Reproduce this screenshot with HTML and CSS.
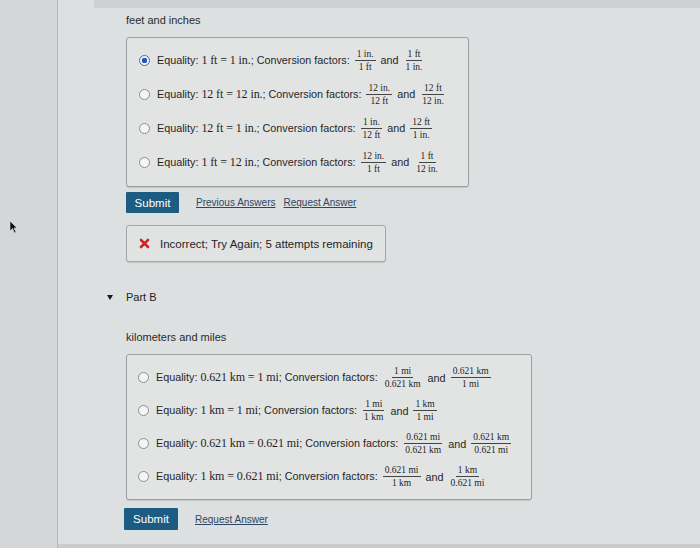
FILE: index.html
```html
<!DOCTYPE html>
<html lang="en">
<head>
<meta charset="utf-8">
<link rel="stylesheet" href="styles.css">
</head>
<body>
<div class="screen">
  <aside class="gutter">
    <svg class="cursor" width="9" height="14" viewBox="0 0 9 14"><path d="M1 1 L1 11 L3.5 8.5 L5.5 13 L7 12.3 L5 8 L8 8 Z" fill="#111" stroke="#ddd" stroke-width="0.6"/></svg>
  </aside>
  <main class="page">
    <div class="topband"></div>

    <section class="part">
      <p class="prompt">feet and inches</p>
      <div class="choices tall">
        <label class="choice">
          <span class="radio checked"></span>
          <span class="txt">Equality: <span class="m">1 ft = 1 in.</span>; Conversion factors:</span>
          <span class="frac"><span class="num">1 in.</span><span class="den">1 ft</span></span>
          <span class="and">and</span>
          <span class="frac"><span class="num">1 ft</span><span class="den">1 in.</span></span>
        </label>
        <label class="choice">
          <span class="radio"></span>
          <span class="txt">Equality: <span class="m">12 ft = 12 in.</span>; Conversion factors:</span>
          <span class="frac"><span class="num">12 in.</span><span class="den">12 ft</span></span>
          <span class="and">and</span>
          <span class="frac"><span class="num">12 ft</span><span class="den">12 in.</span></span>
        </label>
        <label class="choice">
          <span class="radio"></span>
          <span class="txt">Equality: <span class="m">12 ft = 1 in.</span>; Conversion factors:</span>
          <span class="frac"><span class="num">1 in.</span><span class="den">12 ft</span></span>
          <span class="and">and</span>
          <span class="frac"><span class="num">12 ft</span><span class="den">1 in.</span></span>
        </label>
        <label class="choice">
          <span class="radio"></span>
          <span class="txt">Equality: <span class="m">1 ft = 12 in.</span>; Conversion factors:</span>
          <span class="frac"><span class="num">12 in.</span><span class="den">1 ft</span></span>
          <span class="and">and</span>
          <span class="frac"><span class="num">1 ft</span><span class="den">12 in.</span></span>
        </label>
      </div>
      <div class="actions">
        <button class="submit">Submit</button>
        <a class="link first" href="#">Previous Answers</a>
        <a class="link" href="#">Request Answer</a>
      </div>
      <div class="feedback">
        <svg class="xmark" width="11" height="11" viewBox="0 0 11 11"><path d="M2 2 L9 9 M9 2 L2 9" stroke="#c8262b" stroke-width="2.6" stroke-linecap="round"/></svg>
        <span>Incorrect; Try Again; 5 attempts remaining</span>
      </div>
    </section>

    <div class="part-header">
      <span class="caret"></span>
      <span>Part B</span>
    </div>

    <section class="part partb">
      <p class="prompt">kilometers and miles</p>
      <div class="choices short">
        <label class="choice">
          <span class="radio"></span>
          <span class="txt">Equality: <span class="m">0.621 km = 1 mi</span>; Conversion factors:</span>
          <span class="frac"><span class="num">1 mi</span><span class="den">0.621 km</span></span>
          <span class="and">and</span>
          <span class="frac"><span class="num">0.621 km</span><span class="den">1 mi</span></span>
        </label>
        <label class="choice">
          <span class="radio"></span>
          <span class="txt">Equality: <span class="m">1 km = 1 mi</span>; Conversion factors:</span>
          <span class="frac"><span class="num">1 mi</span><span class="den">1 km</span></span>
          <span class="and">and</span>
          <span class="frac"><span class="num">1 km</span><span class="den">1 mi</span></span>
        </label>
        <label class="choice">
          <span class="radio"></span>
          <span class="txt">Equality: <span class="m">0.621 km = 0.621 mi</span>; Conversion factors:</span>
          <span class="frac"><span class="num">0.621 mi</span><span class="den">0.621 km</span></span>
          <span class="and">and</span>
          <span class="frac"><span class="num">0.621 km</span><span class="den">0.621 mi</span></span>
        </label>
        <label class="choice">
          <span class="radio"></span>
          <span class="txt">Equality: <span class="m">1 km = 0.621 mi</span>; Conversion factors:</span>
          <span class="frac"><span class="num">0.621 mi</span><span class="den">1 km</span></span>
          <span class="and">and</span>
          <span class="frac"><span class="num">1 km</span><span class="den">0.621 mi</span></span>
        </label>
      </div>
      <div class="actions actions-b">
        <button class="submit">Submit</button>
        <a class="link first" href="#">Request Answer</a>
      </div>
    </section>
  </main>
</div>
</body>
</html>
```

FILE: styles.css
```css
* { box-sizing: border-box; }
html, body { margin: 0; padding: 0; }
body {
  width: 700px;
  height: 548px;
  overflow: hidden;
  background: #dcdfdf;
  font-family: "Liberation Sans", Arial, sans-serif;
  color: #222;
}
.screen {
  display: flex;
  height: 548px;
}
.gutter {
  position: relative;
  width: 58px;
  flex: none;
  background: #d4d7d7;
  border-right: 1px solid #b4b8b8;
}
.cursor {
  position: absolute;
  left: 9px;
  top: 220px;
}
.page {
  flex: 1;
  background: #dde0e0;
  border-bottom: 4px solid #c9cccc;
}
.topband {
  height: 8px;
  margin-left: 36px;
  background: #cdd0d0;
}
.part {
  padding-left: 68px;
}
.prompt {
  margin: 5px 0 10px;
  font-size: 11px;
  line-height: 14px;
  color: #2a2a2a;
}
.choices {
  border: 1px solid #9c9fa0;
  border-radius: 3px;
  background: #e2e4e4;
  box-shadow: 0 1px 1px rgba(0,0,0,0.12);
}
.choices.tall {
  width: 343px;
  padding: 5px 0 7px 12px;
}
.choices.tall .choice { height: 34px; }
.choices.short {
  width: 406px;
  padding: 6px 0 6px 11px;
}
.choices.short .choice { height: 33px; }
.choice {
  display: flex;
  align-items: center;
  font-size: 10.8px;
  color: #262626;
}
.radio {
  width: 11px;
  height: 11px;
  border-radius: 50%;
  border: 1px solid #8c8f91;
  background: #f4f5f5;
  margin-right: 7px;
  flex: none;
}
.radio.checked {
  border: 1.5px solid #2f6fd1;
  background: radial-gradient(circle, #1f56c2 0 2.6px, #f4f5f5 3px);
}
.txt { white-space: pre; }
.m {
  font-family: "Liberation Serif", "Times New Roman", serif;
  font-size: 12px;
  color: #1e1e1e;
  letter-spacing: -0.1px;
}
.frac {
  display: inline-flex;
  flex-direction: column;
  align-items: center;
  margin-left: 5px;
  font-family: "Liberation Serif", "Times New Roman", serif;
  font-size: 9.5px;
  line-height: 10px;
  color: #1e1e1e;
}
.frac .num {
  padding: 0 2px 1px;
  border-bottom: 1px solid #444;
}
.frac .den {
  padding: 1px 2px 0;
}
.and {
  margin-left: 5px;
}
.actions {
  display: flex;
  align-items: center;
  margin-top: 5px;
}
.actions-b {
  margin-top: 8px;
  margin-left: -2px;
}
.submit {
  width: 53px;
  height: 21px;
  padding: 0;
  border: 0;
  border-radius: 1px;
  background: #1c5c82;
  color: #fff;
  font-family: "Liberation Sans", Arial, sans-serif;
  font-size: 11.5px;
}
.actions-b .submit { height: 22px; width: 54px; }
.link {
  font-size: 10px;
  color: #2c4663;
  text-decoration: underline;
  margin-left: 8px;
}
.link.first { margin-left: 17px; }
.feedback {
  display: flex;
  align-items: center;
  width: 260px;
  height: 37px;
  margin-top: 12px;
  padding-left: 12px;
  border: 1px solid #a4a7a8;
  border-radius: 3px;
  background: #e1e3e3;
  box-shadow: 0 1px 1px rgba(0,0,0,0.12);
  font-size: 11.5px;
  color: #1f1f1f;
}
.xmark { margin-right: 10px; }
.part-header {
  display: flex;
  align-items: center;
  height: 20px;
  margin-top: 25px;
  padding-left: 49px;
  font-size: 11px;
  color: #222;
}
.caret {
  width: 0;
  height: 0;
  border-left: 3.5px solid transparent;
  border-right: 3.5px solid transparent;
  border-top: 5px solid #1a1a1a;
  margin-right: 13px;
}
.partb .prompt {
  margin-top: 23px;
}
```
